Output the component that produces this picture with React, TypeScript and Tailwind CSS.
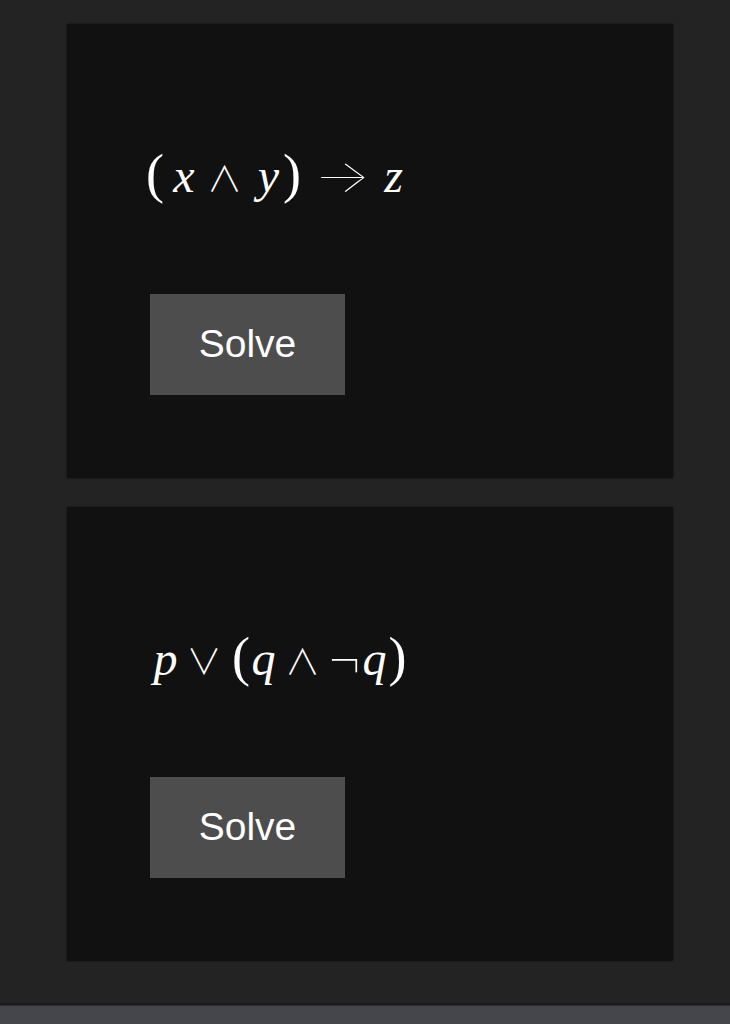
import React from "react"

type Kind = "v" | "p" | "op" | "neg" | "arrow"
type Tok = { c: string; w: number; ml: number; kind: Kind }

const first: Tok[] = [
  { c: "(", w: 10, ml: 0, kind: "p" },
  { c: "x", w: 28, ml: 10, kind: "v" },
  { c: "∧", w: 25, ml: 14, kind: "op" },
  { c: "y", w: 27, ml: 18, kind: "v" },
  { c: ")", w: 10, ml: 5, kind: "p" },
  { c: "→", w: 50, ml: 20, kind: "arrow" },
  { c: "z", w: 23, ml: 15, kind: "v" },
]

const second: Tok[] = [
  { c: "p", w: 25, ml: 3, kind: "v" },
  { c: "∨", w: 22, ml: 15, kind: "op" },
  { c: "(", w: 12, ml: 20, kind: "p" },
  { c: "q", w: 23, ml: 5, kind: "v" },
  { c: "∧", w: 29, ml: 13, kind: "op" },
  { c: "¬", w: 15, ml: 21, kind: "neg" },
  { c: "q", w: 23, ml: 10, kind: "v" },
  { c: ")", w: 11, ml: 6, kind: "p" },
]

const kindClass: Record<Kind, string> = {
  v: "italic text-[48px] font-['Liberation_Serif',serif]",
  p: "text-[54px] font-['Liberation_Serif',serif]",
  op: "text-[35px] font-light font-['Noto_Sans_CJK_JP','DejaVu_Sans',sans-serif]",
  neg: "text-[40px] font-thin scale-x-[1.8] scale-y-[1.8] -translate-y-[3px] font-['Inter','DejaVu_Sans',sans-serif]",
  arrow: "text-[44px] font-thin scale-x-[1.35] font-['Inter','DejaVu_Sans',sans-serif]",
}

function Formula({ toks }: { toks: Tok[] }) {
  return (
    <div className="h-[60px] leading-[60px] text-white whitespace-nowrap flex items-baseline">
      {toks.map((t, i) => (
        <span
          key={i}
          className={`flex justify-center ${kindClass[t.kind]}`}
          style={{ width: t.w, marginLeft: t.ml }}
        >
          {t.c}
        </span>
      ))}
    </div>
  )
}

function Card({ toks }: { toks: Tok[] }) {
  return (
    <div className="w-[606px] h-[454px] bg-[#111111] shadow-[0_0_2px_rgba(0,0,0,0.6)] pl-[83px] pt-[120px] flex flex-col">
      <Formula toks={toks} />
      <button className="mt-[90px] w-[195px] h-[101px] bg-[#4d4d4d] text-white text-[39px] font-['Liberation_Sans',Arial,sans-serif]">
        Solve
      </button>
    </div>
  )
}

export default function App() {
  return (
    <div className="w-[730px] h-[1024px] bg-[#232323] flex flex-col">
      <div className="flex-1 flex flex-col items-start pl-[67px] pt-[24px] gap-[29px]">
        <Card toks={first} />
        <Card toks={second} />
      </div>
      <div className="h-[2px] bg-[#1b1b1b]" />
      <div className="h-[19px] bg-[#45464c] border-t border-[#2e2e30]" />
    </div>
  )
}
